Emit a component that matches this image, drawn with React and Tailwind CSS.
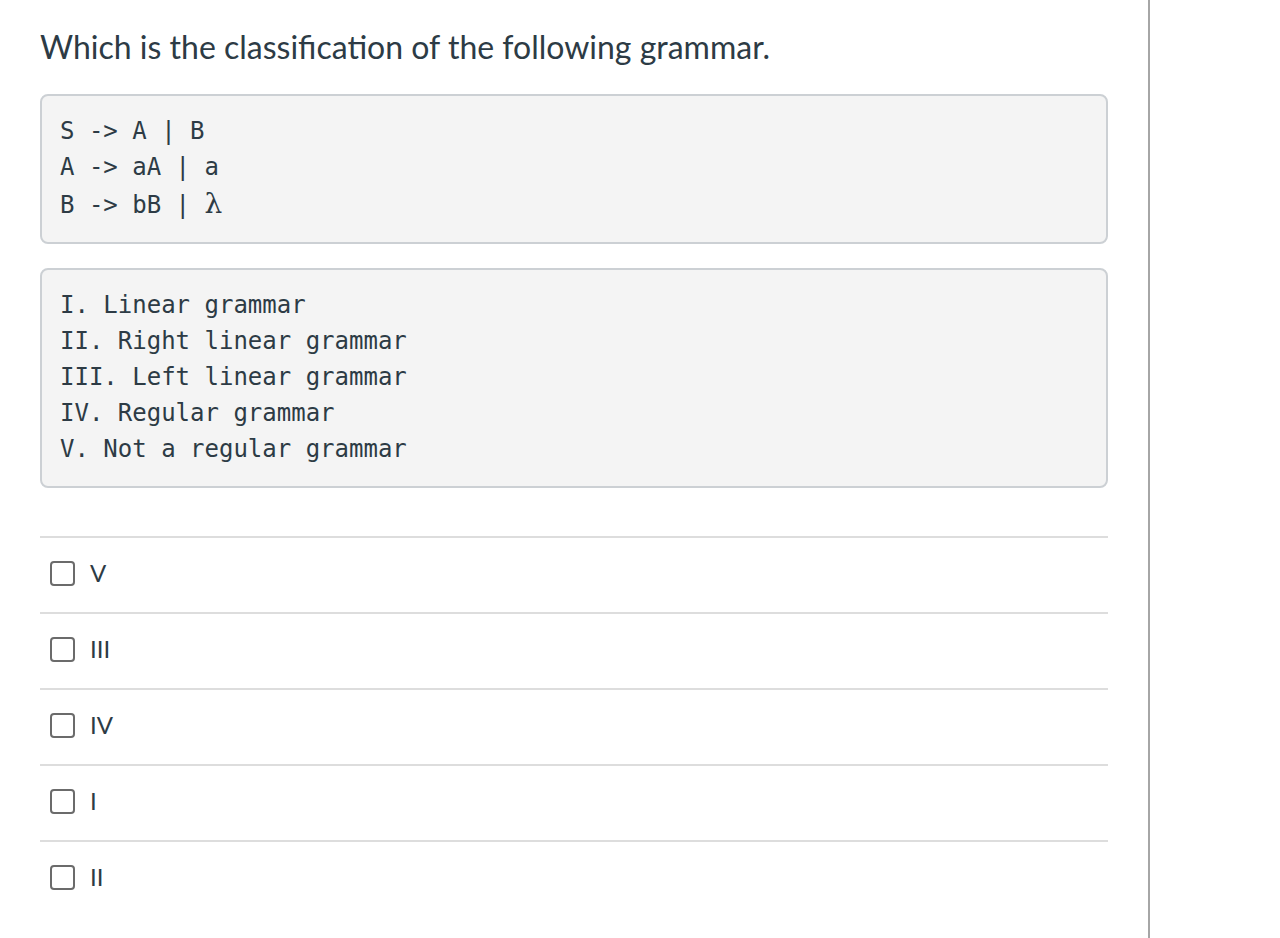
const answers = ["V", "III", "IV", "I", "II"];

const mono = { fontFamily: '"DejaVu Sans Mono", monospace' };

export default function App() {
  return (
    <div className="flex min-h-[938px] bg-white text-[#2d3b45] font-['Lato',sans-serif]">
      {/* ===== QUESTION ===== */}
      <div className="w-[1148px] pl-10 pr-10 pt-[26px]">
        <h1 className="text-[32px] leading-[42px]">
          Which is the classification of the following grammar.
        </h1>

        {/* Grammar */}
        <div
          style={mono}
          className="mt-[26px] rounded-lg border-2 border-[#ccd0d4] bg-[#f4f4f4] pl-[18px] pt-[17px] pb-[18px] text-[24px] leading-[36px] font-medium"
        >
          <div className="whitespace-pre">S -&gt; A | B</div>
          <div className="whitespace-pre">A -&gt; aA | a</div>
          <div className="whitespace-pre leading-[38px]">
            B -&gt; bB | <span className="text-[28px] font-['DejaVu_Serif',serif]">λ</span>
          </div>
        </div>

        {/* Statements */}
        <div
          style={mono}
          className="mt-[24px] rounded-lg border-2 border-[#ccd0d4] bg-[#f4f4f4] pl-[18px] pt-[17px] pb-[19px] text-[24px] leading-[36px]"
        >
          <div>I. Linear grammar</div>
          <div>II. Right linear grammar</div>
          <div>III. Left linear grammar</div>
          <div>IV. Regular grammar</div>
          <div>V. Not a regular grammar</div>
        </div>

        {/* Answers */}
        <div className="mt-[48px]">
          {answers.map((a) => (
            <div
              key={a}
              className="flex h-[76px] items-center gap-[15px] border-t-2 border-[#dddddd] pl-[10px] pb-[4px]"
            >
              <span className="h-[25px] w-[25px] shrink-0 rounded-[4px] border-2 border-[#6b6b6b] bg-white" />
              <span className="text-[24px] leading-none">{a}</span>
            </div>
          ))}
        </div>
      </div>

      {/* ===== RIGHT RULE ===== */}
      <div className="w-[2px] shrink-0 bg-[#a6a6a6]" />
    </div>
  );
}
